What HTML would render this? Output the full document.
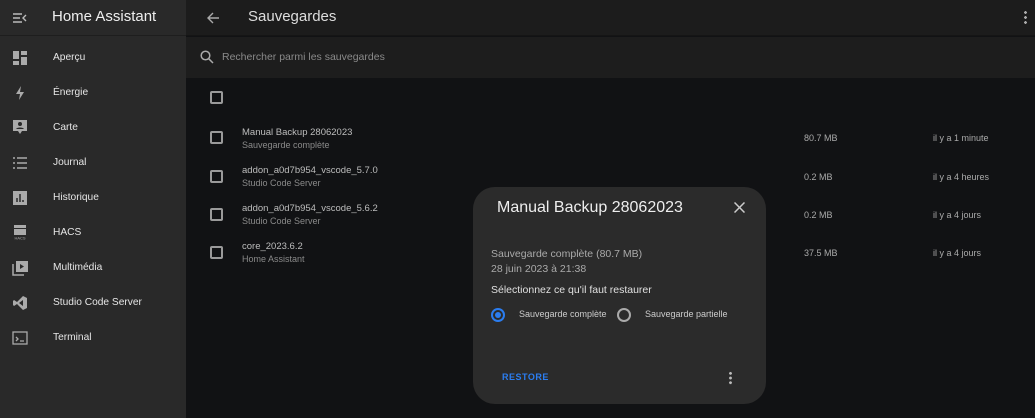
<!DOCTYPE html>
<html><head><meta charset="utf-8"><style>
*{margin:0;padding:0;box-sizing:border-box}
body{width:1035px;height:418px;overflow:hidden;background:#111214;font-family:"Liberation Sans",sans-serif;position:relative}
.side{position:absolute;left:0;top:0;width:186px;height:418px;background:#292929}
.shead{height:36px;border-bottom:1px solid #1e1e1e;position:relative}
.t{position:absolute;white-space:nowrap}
.ico{position:absolute;left:12px;width:16px;height:16px}
.item{position:absolute;left:53px;font-size:10.2px;color:#e6e6e6}
.top{position:absolute;left:186px;top:0;right:0;height:36px;background:#1c1c1c;border-bottom:1px solid #151515}
.search{position:absolute;left:186px;top:37px;right:0;height:41px;background:#1d1d1d}
.cb{position:absolute;left:210px;width:13px;height:13px;border:2px solid #9a9a9a;border-radius:2px}
.n{position:absolute;left:242px;font-size:9.5px;color:#bdbdbd}
.s{position:absolute;left:242px;font-size:9px;color:#8a8a8a}
.sz{position:absolute;left:804px;font-size:9px;color:#aaa}
.tm{position:absolute;left:933px;font-size:9px;color:#aaa}
.dlg{position:absolute;left:473px;top:187px;width:293px;height:217px;background:#2b2b2b;border-radius:22px}
</style></head><body>
<div class="side">
 <div class="shead">
  <svg class="ico" style="top:10px" viewBox="0 0 16 16" fill="none" stroke="#bbb" stroke-width="1.4"><path d="M1 4h9M1 8h7M1 12h9M14 5l-3 3 3 3"/></svg>
  <div class="t" style="left:52px;top:8px;font-size:15px;color:#eee">Home Assistant</div>
 </div>
 <svg class="ico" style="top:50px" viewBox="0 0 16 16" fill="#aaa"><rect x="1" y="1" width="6" height="8"/><rect x="9" y="1" width="6" height="4"/><rect x="1" y="11" width="6" height="4"/><rect x="9" y="7" width="6" height="8"/></svg>
 <div class="item" style="top:52px">Aperçu</div>
 <svg class="ico" style="top:85px" viewBox="0 0 16 16" fill="#aaa"><path d="M9 1L4 9h4l-1 6 5-8H8z"/></svg>
 <div class="item" style="top:87px">Énergie</div>
 <svg class="ico" style="top:119px" viewBox="0 0 16 16" fill="#aaa"><path d="M1 1h14v11H10l-2 3-2-3H1z"/><circle cx="8" cy="5" r="2" fill="#292929"/><path d="M4 10c1-2 7-2 8 0z" fill="#292929"/></svg>
 <div class="item" style="top:122px">Carte</div>
 <svg class="ico" style="top:155px" viewBox="0 0 16 16" stroke="#aaa" stroke-width="1.5"><path d="M5 3h10M5 8h10M5 13h10M1 3h2M1 8h2M1 13h2"/></svg>
 <div class="item" style="top:157px">Journal</div>
 <svg class="ico" style="top:190px" viewBox="0 0 16 16"><rect x="1" y="1" width="14" height="14" fill="#aaa"/><path d="M5 12V8M8 12V4M11 12v-2" stroke="#292929" stroke-width="1.5"/></svg>
 <div class="item" style="top:192px">Historique</div>
 <svg class="ico" style="top:224px" viewBox="0 0 16 16" fill="#aaa"><rect x="2" y="1" width="12" height="3"/><rect x="2" y="5" width="12" height="6"/><text x="8" y="15.5" font-size="4" text-anchor="middle" fill="#aaa" font-family="Liberation Sans">HACS</text></svg>
 <div class="item" style="top:227px">HACS</div>
 <svg class="ico" style="top:260px" viewBox="0 0 16 16"><rect x="4" y="1" width="12" height="11" fill="#aaa"/><path d="M1 4v11h11" stroke="#aaa" stroke-width="1.5" fill="none"/><path d="M8 4l4 2.5-4 2.5z" fill="#292929"/></svg>
 <div class="item" style="top:262px">Multimédia</div>
 <svg class="ico" style="top:295px" viewBox="0 0 16 16" fill="#aaa"><path d="M11 1l4 2v10l-4 2-6-6-3 2-1-1V6l1-1 3 2 6-6zM11 5L7 8l4 3z"/></svg>
 <div class="item" style="top:297px">Studio Code Server</div>
 <svg class="ico" style="top:330px" viewBox="0 0 16 16" fill="none" stroke="#aaa" stroke-width="1.3"><rect x="1" y="2" width="14" height="12"/><path d="M4 7l2 2-2 2M8 11h4"/></svg>
 <div class="item" style="top:332px">Terminal</div>
</div>
<div class="top">
 <svg style="position:absolute;left:20px;top:11px" width="14" height="14" viewBox="0 0 14 14" fill="none" stroke="#aaa" stroke-width="1.4"><path d="M13 7H2M7 2L2 7l5 5"/></svg>
 <div class="t" style="left:62px;top:8px;font-size:15px;color:#ddd">Sauvegardes</div>
 <div class="t" style="left:838px;top:10px;width:3px;height:14px;background:radial-gradient(circle,#aaa 1.3px,transparent 1.5px) 0 0/3px 5px"></div>
</div>
<div class="search">
 <svg style="position:absolute;left:14px;top:13px" width="14" height="14" viewBox="0 0 14 14" fill="none" stroke="#aaa" stroke-width="1.5"><circle cx="5.5" cy="5.5" r="4.3"/><path d="M8.7 8.7L13 13"/></svg>
 <div class="t" style="left:36px;top:14px;font-size:10.5px;color:#8a8a8a">Rechercher parmi les sauvegardes</div>
</div>
<div class="cb" style="top:91px"></div>
<div class="cb" style="top:131px"></div><div class="n" style="top:127px">Manual Backup 28062023</div><div class="s" style="top:140px">Sauvegarde complète</div>
<div class="cb" style="top:170px"></div><div class="n" style="top:165px">addon_a0d7b954_vscode_5.7.0</div><div class="s" style="top:178px">Studio Code Server</div>
<div class="cb" style="top:208px"></div><div class="n" style="top:203px">addon_a0d7b954_vscode_5.6.2</div><div class="s" style="top:216px">Studio Code Server</div>
<div class="cb" style="top:246px"></div><div class="n" style="top:241px">core_2023.6.2</div><div class="s" style="top:254px">Home Assistant</div>
<div class="sz" style="top:133px">80.7 MB</div><div class="tm" style="top:133px">il y a 1 minute</div>
<div class="sz" style="top:172px">0.2 MB</div><div class="tm" style="top:172px">il y a 4 heures</div>
<div class="sz" style="top:210px">0.2 MB</div><div class="tm" style="top:210px">il y a 4 jours</div>
<div class="sz" style="top:248px">37.5 MB</div><div class="tm" style="top:248px">il y a 4 jours</div>
<div class="dlg">
 <div class="t" style="left:24px;top:12px;font-size:16px;color:#eee">Manual Backup 28062023</div>
 <svg style="position:absolute;left:261px;top:15px" width="11" height="11" viewBox="0 0 11 11" stroke="#ccc" stroke-width="1.5"><path d="M0.5 0.5l10 10M10.5 0.5l-10 10"/></svg>
 <div class="t" style="left:18px;top:61px;font-size:10.5px;color:#aaa">Sauvegarde complète (80.7 MB)</div>
 <div class="t" style="left:18px;top:76px;font-size:10.5px;color:#aaa">28 juin 2023 à 21:38</div>
 <div class="t" style="left:18px;top:97px;font-size:10.5px;color:#e0e0e0">Sélectionnez ce qu'il faut restaurer</div>
 <div style="position:absolute;left:18px;top:121px;width:14px;height:14px;border:2px solid #2b7df0;border-radius:50%"><div style="position:absolute;left:2px;top:2px;width:6px;height:6px;background:#2b7df0;border-radius:50%"></div></div>
 <div class="t" style="left:46px;top:122px;font-size:9px;color:#ccc">Sauvegarde complète</div>
 <div style="position:absolute;left:144px;top:121px;width:14px;height:14px;border:2px solid #aaa;border-radius:50%"></div>
 <div class="t" style="left:172px;top:122px;font-size:9px;color:#ccc">Sauvegarde partielle</div>
 <div class="t" style="left:29px;top:185px;font-size:9px;font-weight:bold;letter-spacing:0.5px;color:#2b7df0">RESTORE</div>
 <div class="t" style="left:256px;top:184px;width:3px;height:14px;background:radial-gradient(circle,#bbb 1.3px,transparent 1.5px) 0 0/3px 4.7px"></div>
</div>
</body></html>
